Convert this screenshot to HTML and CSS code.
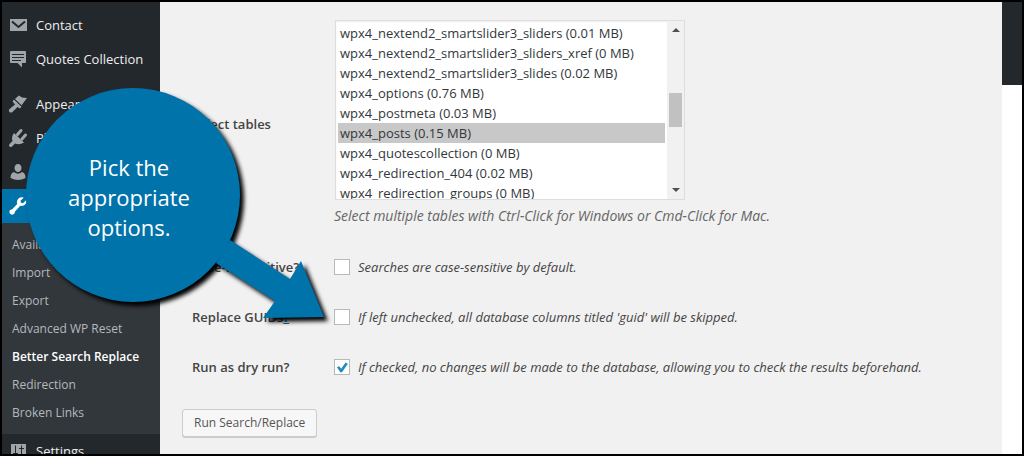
FILE: index.html
```html
<!DOCTYPE html>
<html lang="en">
<head>
    <meta charset="UTF-8">
    <meta name="viewport" content="width=device-width, initial-scale=1.0">
    <title>Better Search Replace</title>
    <link rel="stylesheet" href="styles.css">
</head>
<body>
<div class="frame">

    <nav class="sidebar">
        <a class="menu-item" href="#">
            <svg class="icon" viewBox="0 0 20 20"><path d="M2 4h17v12H2z"/><path class="cut" d="M4 6.500l6.500 5.500 6.500-5.500"/></svg>
            Contact
        </a>
        <a class="menu-item" href="#">
            <svg class="icon" viewBox="0 0 20 20"><path d="M3 2h14q1 0 1 1v10q0 1-1 1h-3v4.500L9.500 14H3q-1 0-1-1V3q0-1 1-1z"/><path class="cut thin" d="M4 5.500h12M4 8.500h12M4 11.500h9"/></svg>
            Quotes Collection
        </a>
        <a class="menu-item separated" href="#">
            <svg class="icon" viewBox="0 0 20 20"><path d="M8.500 3.500L11 1.500l3 2 5 .5-4.500 6-1 1.500L7 5z"/><path d="M6 5.500l7.500 7-1.500 2-2.500-1.500L4.500 18q-1.500 1-3 0t0-3L7 10.500 4.500 7.500z"/><path class="cut thin" d="M6.500 5.500l7 6.500"/></svg>
            Appearance
        </a>
        <a class="menu-item" href="#">
            <svg class="icon" viewBox="0 0 20 20"><path d="M6 5l10 9.500q-4.500 3-9 1L4 18.500q-1.500 1-2.500 0t0-2.500l3-3Q3 9 6 5z"/><path class="prong" d="M9.500 6.500l3.500-4M14 11l3.500-4"/></svg>
            Plugins
        </a>
        <a class="menu-item" href="#">
            <svg class="icon" viewBox="0 0 20 20"><path d="M10 2c2.200 0 3.500 1.700 3.500 4S12 10 10 10 6.500 8.300 6.500 6 7.800 2 10 2z"/><path d="M6 10q4 3.500 8 0 3.500 1 3.500 6-7.500 4-15 0Q2.500 11 6 10z"/></svg>
            Users
        </a>
        <a class="menu-item current" href="#">
            <svg class="icon" viewBox="0 0 20 20"><path d="M17.500 8c-1.500 1.800-3.500 2.200-5.200 1.800L7 15.500l-.5 2q-2 2-4 .5t-.5-4l2.200-.7 5-5.300C8.500 6 9 4 10.500 2.600 12 1.200 14 1 15.600 1.700L12.500 4.800l.5 2 2 .5 3-3c.6 1.300.4 2.700-.5 3.700z"/></svg>
            Tools
        </a>
        <ul class="submenu">
            <li><a href="#">Available Tools</a></li>
            <li><a href="#">Import</a></li>
            <li><a href="#">Export</a></li>
            <li><a href="#">Advanced WP Reset</a></li>
            <li><a class="active" href="#">Better Search Replace</a></li>
            <li><a href="#">Redirection</a></li>
            <li><a href="#">Broken Links</a></li>
        </ul>
        <a class="menu-item" href="#">
            <svg class="icon" viewBox="0 0 20 20"><path d="M3 3h15v15H3z"/><path class="cut thin" d="M7.500 4.500v12M5 12.500h5M13.500 4.500v12M11 7.500h5"/></svg>
            Settings
        </a>
    </nav>

    <main class="content">
        <form class="options">
            <div class="row">
                <label class="name" for="tables">Select tables</label>
                <div>
                    <div class="listbox">
                        <select id="tables" multiple size="9">
                            <option>wpx4_nextend2_smartslider3_sliders (0.01 MB)</option>
                            <option>wpx4_nextend2_smartslider3_sliders_xref (0 MB)</option>
                            <option>wpx4_nextend2_smartslider3_slides (0.02 MB)</option>
                            <option>wpx4_options (0.76 MB)</option>
                            <option>wpx4_postmeta (0.03 MB)</option>
                            <option selected>wpx4_posts (0.15 MB)</option>
                            <option>wpx4_quotescollection (0 MB)</option>
                            <option>wpx4_redirection_404 (0.02 MB)</option>
                            <option>wpx4_redirection_groups (0 MB)</option>
                        </select>
                        <div class="scrollbar">
                            <svg class="arrow" viewBox="0 0 8 4"><path d="M4 0l4 4H0z"/></svg>
                            <span class="thumb"></span>
                            <svg class="arrow" viewBox="0 0 8 4"><path d="M0 0h8L4 4z"/></svg>
                        </div>
                    </div>
                    <p class="hint">Select multiple tables with Ctrl-Click for Windows or Cmd-Click for Mac.</p>
                </div>
            </div>
            <div class="row">
                <label class="name" for="case">Case-Insensitive?</label>
                <div class="check">
                    <input type="checkbox" id="case">
                    <label for="case">Searches are case-sensitive by default.</label>
                </div>
            </div>
            <div class="row">
                <div class="name"><label for="guids">Replace GUIDs</label><a href="#">?</a></div>
                <div class="check">
                    <input type="checkbox" id="guids">
                    <label for="guids">If left unchecked, all database columns titled 'guid' will be skipped.</label>
                </div>
            </div>
            <div class="row">
                <label class="name" for="dry">Run as dry run?</label>
                <div class="check">
                    <input type="checkbox" id="dry" checked>
                    <label for="dry">If checked, no changes will be made to the database, allowing you to check the results beforehand.</label>
                </div>
            </div>
            <button class="run" type="button">Run Search/Replace</button>
        </form>
    </main>

    <div class="edge"></div>

    <!-- bubble pointing at the checkboxes -->
    <div class="callout">
        <svg class="bubble" viewBox="0 0 310 240">
            <circle cx="107" cy="107" r="107"/>
            <path d="M190 175L204 152 264 191 275 173 298 229 237 230 249 213 190 175z"/>
        </svg>
        <p class="callout-text">Pick the appropriate options.</p>
    </div>

</div>
</body>
</html>
```
FILE: styles.css
```css
* {
    box-sizing: border-box;
}
body {
    margin: 0;
    font-family: "Open Sans", "Noto Sans", sans-serif;
    font-size: 13px;
    line-height: 20px;
    color: #444;
}
.frame {
    position: relative;
    display: flex;
    height: 100vh;
    border: 2px solid #000;
    background: #f1f1f1;
    overflow: hidden;
}

/* admin menu */
.sidebar {
    flex: 0 0 158px;
    padding-top: 6px;
    background: #23282d;
}
.menu-item {
    display: flex;
    align-items: center;
    gap: 8px;
    height: 34px;
    padding-left: 6px;
    color: #eee;
    text-decoration: none;
    white-space: nowrap;
}
.separated {
    margin-top: 11px;
}
.current {
    background: #0073aa;
    color: #fff;
}
.icon {
    width: 20px;
    height: 20px;
    fill: #a0a5aa;
}
.current .icon {
    fill: #fff;
}
.cut {
    fill: none;
    stroke: #23282d;
    stroke-width: 2;
}
.thin {
    stroke-width: 1;
}
.prong {
    fill: none;
    stroke: #a0a5aa;
    stroke-width: 3;
    stroke-linecap: round;
}
.submenu {
    margin: 0;
    padding: 8px 0 7px 10px;
    list-style: none;
    background: #32373c;
    font-size: 12px;
    line-height: 28px;
}
.submenu a {
    color: #b4b9be;
    text-decoration: none;
    white-space: nowrap;
}
.submenu .active {
    color: #fff;
    font-weight: 600;
}

/* form */
.content {
    flex: 1;
    padding: 3px 20px 0 22px;
}
.row {
    display: grid;
    grid-template-columns: 142px 1fr;
    align-items: center;
    padding: 15px 0 15px 10px;
}
.name {
    font-weight: 600;
}
.name a {
    color: #0073aa;
}
.listbox {
    display: flex;
    width: 350px;
    height: 180px;
    margin-left: 1px;
    border: 1px solid #ddd;
    background: #fff;
    box-shadow: inset 0 1px 2px rgba(0, 0, 0, .07);
}
.listbox select {
    flex: 1;
    height: 178px;
    padding: 2px;
    border: 0;
    outline: 0;
    background: transparent;
    color: #32373c;
    font: inherit;
    overflow: hidden;
}
.listbox option {
    height: 20px;
    min-height: 20px;
    padding: 1px 2px 0;
    line-height: 20px;
}
.listbox option:checked {
    background: #c8c8c8;
    color: #32373c;
}
.scrollbar {
    display: flex;
    flex-direction: column;
    justify-content: space-between;
    align-items: center;
    width: 17px;
    padding: 7px 0;
    background: #f1f1f1;
}
.arrow {
    width: 8px;
    height: 4px;
    fill: #505050;
}
.thumb {
    width: 13px;
    height: 34px;
    background: #c1c1c1;
}
.hint {
    margin: 6px 0 1px;
    color: #666;
    font-size: 14px;
    font-style: italic;
}
.check {
    display: flex;
    align-items: center;
    gap: 8px;
    font-style: italic;
}
.check input {
    appearance: none;
    flex: none;
    width: 16px;
    height: 16px;
    margin: 0;
    border: 1px solid #b4b9be;
    background: #fff;
}
.check input:checked::before {
    content: "";
    display: block;
    width: 14px;
    height: 14px;
    background: #1e8cbe;
    clip-path: polygon(14% 52%, 30% 44%, 44% 62%, 76% 18%, 92% 26%, 50% 88%, 38% 88%);
}
.run {
    height: 28px;
    margin-top: 17px;
    padding: 0 11px;
    border: 1px solid #ccc;
    border-radius: 3px;
    background: #f7f7f7;
    box-shadow: 0 1px 0 #ccc;
    color: #555;
    font: inherit;
    font-size: 12px;
}

.edge {
    flex: 0 0 20px;
    background: linear-gradient(#23282d 83px, #fff 83px);
}

/* callout */
.callout {
    position: absolute;
    left: 24px;
    top: 86px;
    width: 310px;
    height: 240px;
}
.bubble {
    display: block;
    width: 310px;
    height: 240px;
    overflow: visible;
    fill: #0073aa;
    filter: drop-shadow(4px 4px 2px #000);
}
.callout-text {
    position: absolute;
    left: 33px;
    top: 64px;
    width: 140px;
    margin: 0;
    color: #fff;
    font-size: 22px;
    line-height: 30px;
    text-align: center;
}
```
